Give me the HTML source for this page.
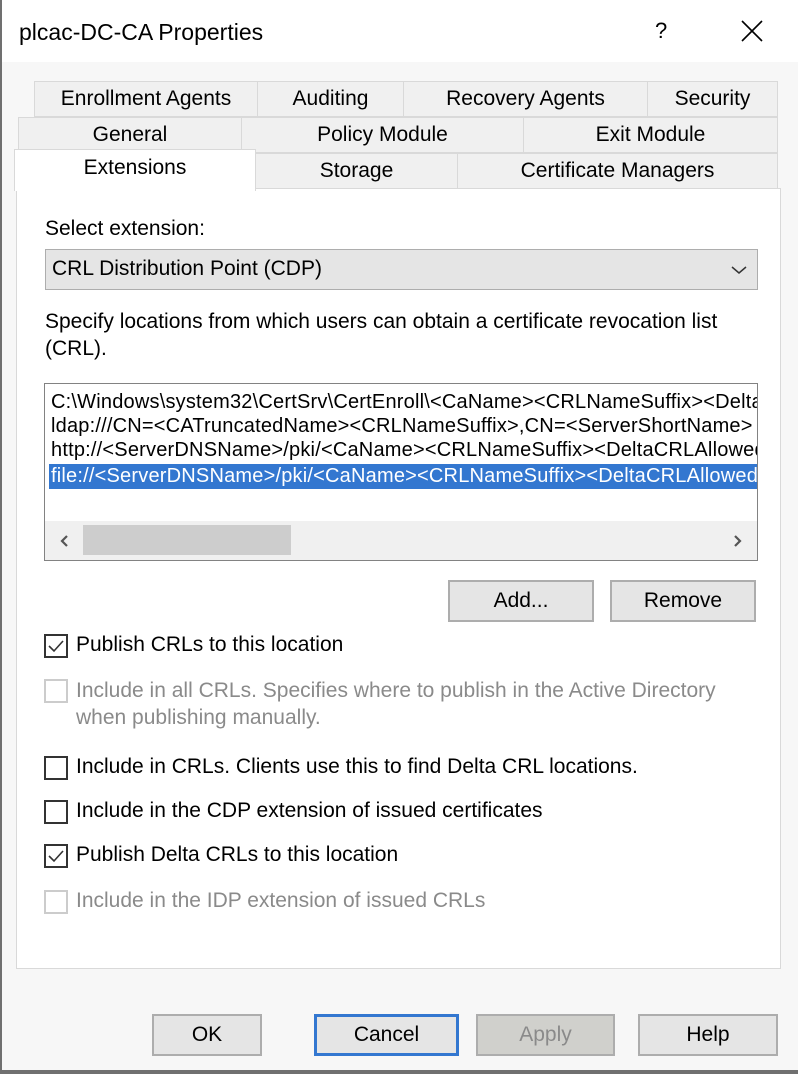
<!DOCTYPE html>
<html><head><style>
*{box-sizing:border-box;margin:0;padding:0}
body{width:798px;height:1074px;background:#f7f7f7;font-family:"Liberation Sans",sans-serif;font-size:21px;color:#000;position:relative;overflow:hidden}
.a{position:absolute;white-space:nowrap}
.tab{position:absolute;background:#f0f0f0;border:1px solid #d9d9d9;text-align:center;line-height:34px;height:36px}
.btn{position:absolute;background:#e5e5e5;border:2px solid #adadad;text-align:center;line-height:38px;height:42px}
.cb{position:absolute;left:44px;width:24px;height:24px;border:2px solid #333;background:#fff}
.cb.d{border-color:#ccc}
.g{color:#8a8a8a}
</style></head><body>
<div class="a" style="left:0;top:0;width:798px;height:62px;background:#fff"></div>
<div class="a" style="left:0;top:0;width:2px;height:1074px;background:#707070"></div>
<div class="a" style="left:0;top:1070px;width:798px;height:4px;background:#707070"></div>
<div class="a" style="left:19px;top:19px;font-size:23px">plcac-DC-CA Properties</div>
<div class="a" style="left:655px;top:18px;font-size:22px">?</div>
<svg class="a" style="left:741px;top:20px" width="22" height="22"><path d="M1 1L21 21M21 1L1 21" stroke="#000" stroke-width="1.6"/></svg>

<div class="tab" style="left:34px;top:81px;width:224px">Enrollment Agents</div>
<div class="tab" style="left:257px;top:81px;width:147px">Auditing</div>
<div class="tab" style="left:403px;top:81px;width:245px">Recovery Agents</div>
<div class="tab" style="left:647px;top:81px;width:131px">Security</div>
<div class="tab" style="left:18px;top:117px;width:224px">General</div>
<div class="tab" style="left:241px;top:117px;width:283px">Policy Module</div>
<div class="tab" style="left:523px;top:117px;width:255px">Exit Module</div>
<div class="a" style="left:16px;top:188px;width:765px;height:781px;background:#fff;border:1px solid #d9d9d9"></div>
<div class="tab" style="left:255px;top:153px;width:203px;height:36px">Storage</div>
<div class="tab" style="left:457px;top:153px;width:321px;height:36px">Certificate Managers</div>
<div class="a" style="left:14px;top:149px;width:242px;height:42px;background:#fff;border:1px solid #d9d9d9;border-bottom:none;text-align:center;line-height:36px">Extensions</div>

<div class="a" style="left:45px;top:217px">Select extension:</div>
<div class="a" style="left:45px;top:249px;width:713px;height:41px;background:#e5e5e5;border:1px solid #adadad;padding-left:6px;line-height:38px">CRL Distribution Point (CDP)</div>
<svg class="a" style="left:731px;top:265px" width="16" height="10"><path d="M1 2L8 8L15 2" stroke="#333" stroke-width="1.5" fill="none"/></svg>
<div class="a" style="left:45px;top:308px;line-height:27px;white-space:normal;width:720px">Specify locations from which users can obtain a certificate revocation list (CRL).</div>

<div class="a" style="left:44px;top:383px;width:714px;height:178px;border:1px solid #828282;background:#fff;overflow:hidden">
<div style="position:absolute;left:6px;top:6px;font-size:20px;line-height:24px;letter-spacing:0.2px">
<div>C:\Windows\system32\CertSrv\CertEnroll\&lt;CaName&gt;&lt;CRLNameSuffix&gt;&lt;DeltaCRLAllowed&gt;.crl</div>
<div>ldap:///CN=&lt;CATruncatedName&gt;&lt;CRLNameSuffix&gt;,CN=&lt;ServerShortName&gt;</div>
<div>http://&lt;ServerDNSName&gt;/pki/&lt;CaName&gt;&lt;CRLNameSuffix&gt;&lt;DeltaCRLAllowed&gt;</div>
</div>
<div style="position:absolute;left:4px;top:80px;width:708px;height:25px;background:#3377d0;color:#fff;font-size:20px;line-height:24px;padding-left:2px;letter-spacing:0.2px;overflow:hidden">file://&lt;ServerDNSName&gt;/pki/&lt;CaName&gt;&lt;CRLNameSuffix&gt;&lt;DeltaCRLAllowed&gt;</div>
<div style="position:absolute;left:0;top:137px;width:712px;height:39px;background:#f0f0f0"></div>
<div style="position:absolute;left:38px;top:141px;width:208px;height:30px;background:#cdcdcd"></div>
<svg style="position:absolute;left:14px;top:151px" width="10" height="12"><path d="M8 1L3 6L8 11" stroke="#555" stroke-width="2.2" fill="none"/></svg>
<svg style="position:absolute;left:688px;top:151px" width="10" height="12"><path d="M2 1L7 6L2 11" stroke="#555" stroke-width="2.2" fill="none"/></svg>
</div>

<div class="btn" style="left:448px;top:580px;width:146px">Add...</div>
<div class="btn" style="left:610px;top:580px;width:146px">Remove</div>

<div class="cb" style="top:634px"><svg width="20" height="20"><path d="M3 10L8 15L17 5" stroke="#333" stroke-width="1.6" fill="none"/></svg></div>
<div class="a" style="left:76px;top:633px">Publish CRLs to this location</div>
<div class="cb d" style="top:679px"></div>
<div class="a g" style="left:76px;top:677px;line-height:27px">Include in all CRLs. Specifies where to publish in the Active Directory<br>when publishing manually.</div>
<div class="cb" style="top:756px"></div>
<div class="a" style="left:76px;top:755px">Include in CRLs. Clients use this to find Delta CRL locations.</div>
<div class="cb" style="top:800px"></div>
<div class="a" style="left:76px;top:799px">Include in the CDP extension of issued certificates</div>
<div class="cb" style="top:844px"><svg width="20" height="20"><path d="M3 10L8 15L17 5" stroke="#333" stroke-width="1.6" fill="none"/></svg></div>
<div class="a" style="left:76px;top:843px">Publish Delta CRLs to this location</div>
<div class="cb d" style="top:890px"></div>
<div class="a g" style="left:76px;top:889px">Include in the IDP extension of issued CRLs</div>

<div class="btn" style="left:152px;top:1014px;width:110px">OK</div>
<div class="btn" style="left:314px;top:1014px;width:145px;border:3px solid #3377d0;line-height:36px">Cancel</div>
<div class="btn" style="left:476px;top:1014px;width:139px;background:#d0d0cc;color:#8a8a8a">Apply</div>
<div class="btn" style="left:638px;top:1014px;width:140px">Help</div>
</body></html>
